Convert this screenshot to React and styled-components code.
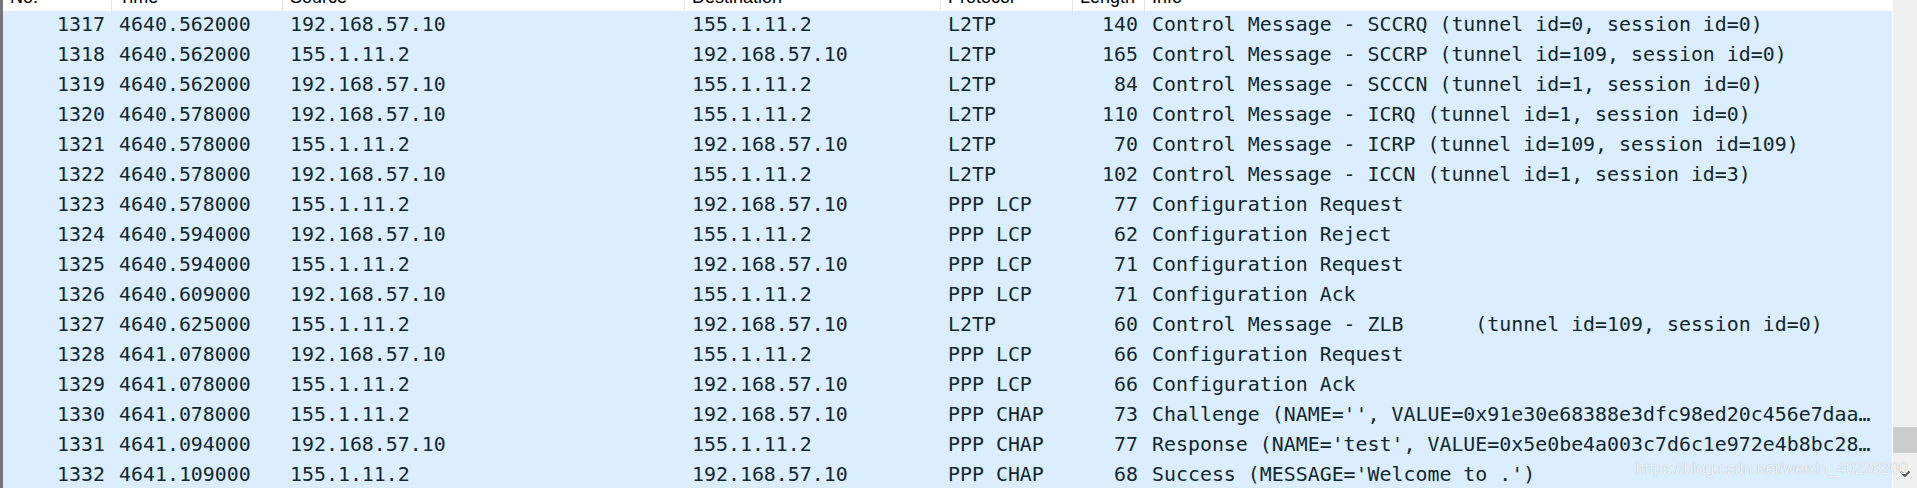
import React from "react";
import styled, { createGlobalStyle } from "styled-components";

const COLUMNS = "109px 171px 402px 256px 132px 72px 1fr";

const headers = ["No.", "Time", "Source", "Destination", "Protocol", "Length", "Info"];

const A = "192.168.57.10";
const B = "155.1.11.2";

const packets = [
    [1317, "4640.562000", A, B, "L2TP", 140, "Control Message - SCCRQ (tunnel id=0, session id=0)"],
    [1318, "4640.562000", B, A, "L2TP", 165, "Control Message - SCCRP (tunnel id=109, session id=0)"],
    [1319, "4640.562000", A, B, "L2TP", 84, "Control Message - SCCCN (tunnel id=1, session id=0)"],
    [1320, "4640.578000", A, B, "L2TP", 110, "Control Message - ICRQ (tunnel id=1, session id=0)"],
    [1321, "4640.578000", B, A, "L2TP", 70, "Control Message - ICRP (tunnel id=109, session id=109)"],
    [1322, "4640.578000", A, B, "L2TP", 102, "Control Message - ICCN (tunnel id=1, session id=3)"],
    [1323, "4640.578000", B, A, "PPP LCP", 77, "Configuration Request"],
    [1324, "4640.594000", A, B, "PPP LCP", 62, "Configuration Reject"],
    [1325, "4640.594000", B, A, "PPP LCP", 71, "Configuration Request"],
    [1326, "4640.609000", A, B, "PPP LCP", 71, "Configuration Ack"],
    [1327, "4640.625000", B, A, "L2TP", 60, "Control Message - ZLB      (tunnel id=109, session id=0)"],
    [1328, "4641.078000", A, B, "PPP LCP", 66, "Configuration Request"],
    [1329, "4641.078000", B, A, "PPP LCP", 66, "Configuration Ack"],
    [1330, "4641.078000", B, A, "PPP CHAP", 73, "Challenge (NAME='', VALUE=0x91e30e68388e3dfc98ed20c456e7daa…"],
    [1331, "4641.094000", A, B, "PPP CHAP", 77, "Response (NAME='test', VALUE=0x5e0be4a003c7d6c1e972e4b8bc28…"],
    [1332, "4641.109000", B, A, "PPP CHAP", 68, "Success (MESSAGE='Welcome to .')"],
];

const App = () => {
    return (
        <Page>
            <GlobalStyle />
            <Table>
                <HeaderRow>
                    {headers.map((label) => (
                        <HeaderCell key={label}>
                            <span>{label}</span>
                        </HeaderCell>
                    ))}
                </HeaderRow>
                {packets.map((p) => (
                    <Row key={p[0]}>
                        <Cell $right>{p[0]}</Cell>
                        <Cell>{p[1]}</Cell>
                        <Cell>{p[2]}</Cell>
                        <Cell>{p[3]}</Cell>
                        <Cell>{p[4]}</Cell>
                        <Cell $right>{p[5]}</Cell>
                        <Cell>{p[6]}</Cell>
                    </Row>
                ))}
            </Table>
            <Scrollbar>
                <Track />
                <Thumb />
                <ArrowButton>
                    <svg width="12" height="8" viewBox="0 0 12 8">
                        <path
                            d="M1.5 1.5 L6 6 L10.5 1.5"
                            fill="none"
                            stroke="#5f5f5f"
                            strokeWidth="2"
                        />
                    </svg>
                </ArrowButton>
            </Scrollbar>
            <Watermark>https://blog.csdn.net/weixin_40228200</Watermark>
        </Page>
    );
};

const GlobalStyle = createGlobalStyle`
    html, body {
        margin: 0;
        padding: 0;
        background: #ffffff;
        overflow: hidden;
    }
`;

const Page = styled.div`
    position: relative;
    width: 1917px;
    height: 488px;
    display: flex;
    overflow: hidden;
`;

const Table = styled.div`
    flex: 1;
    display: flex;
    flex-direction: column;
    border-left: 3px solid #767676;
    overflow: hidden;
`;

const HeaderRow = styled.div`
    display: grid;
    grid-template-columns: ${COLUMNS};
    height: 11px;
    flex-shrink: 0;
    background: #ffffff;
`;

const HeaderCell = styled.div`
    display: flex;
    align-items: flex-end;
    overflow: hidden;
    padding: 0 7px;
    border-right: 1px solid #e5e5e5;
    font-family: "Liberation Sans", Arial, sans-serif;
    font-size: 18px;
    color: #000000;

    span {
        line-height: 20px;
        margin-bottom: 4px;
        white-space: nowrap;
    }

    &:last-child {
        border-right: none;
    }
`;

const Row = styled.div`
    display: grid;
    grid-template-columns: ${COLUMNS};
    height: 30px;
    flex-shrink: 0;
    background: #daeeff;
    color: #12272e;
    font-family: "DejaVu Sans Mono", "Liberation Mono", monospace;
    font-size: 19.9px;
`;

const Cell = styled.div`
    padding: 0 7px 2px;
    line-height: 28px;
    white-space: pre;
    overflow: hidden;
    text-align: ${(props) => (props.$right ? "right" : "left")};
`;

const Scrollbar = styled.div`
    width: 24px;
    flex-shrink: 0;
    display: flex;
    flex-direction: column;
    background: #f0f0f0;
    border-left: 1px solid #ffffff;
`;

const Track = styled.div`
    flex: 1;
`;

const Thumb = styled.div`
    height: 26px;
    background: #cdcdcd;
`;

const ArrowButton = styled.div`
    height: 35px;
    display: flex;
    justify-content: center;
    align-items: flex-start;
    padding-top: 17px;
    box-sizing: border-box;

    svg {
        display: block;
    }
`;

const Watermark = styled.div`
    position: absolute;
    right: 9px;
    top: 460px;
    font-family: "Liberation Sans", Arial, sans-serif;
    font-size: 16px;
    line-height: 18px;
    color: rgba(255, 255, 255, 0.8);
    text-shadow: 0 0 1px rgba(70, 70, 70, 0.35);
    white-space: nowrap;
    pointer-events: none;
`;

export default App;
